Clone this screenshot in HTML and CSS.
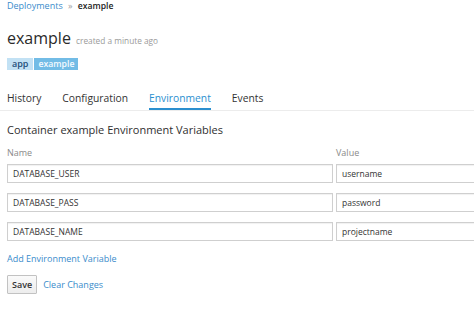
FILE: index.html
```html
<!DOCTYPE html>
<html lang="en">
<head>
    <meta charset="UTF-8">
    <title>example - Environment</title>
    <link rel="stylesheet" href="styles.css">
</head>
<body>
<div class="page">
    <div class="crumbs">
        <a href="#">Deployments</a>
        <span class="sep">&raquo;</span>
        <strong>example</strong>
    </div>

    <h1 class="title">example <small>created a minute ago</small></h1>

    <div class="labels">
        <span class="lbl_key">app</span><span class="lbl_val">example</span>
    </div>

    <ul class="tabs">
        <li>History</li>
        <li>Configuration</li>
        <li class="active">Environment</li>
        <li>Events</li>
    </ul>

    <h3 class="section">Container example Environment Variables</h3>

    <div class="env">
        <div class="env_head">
            <span>Name</span>
            <span>Value</span>
        </div>
        <div class="env_row">
            <input type="text" value="DATABASE_USER">
            <input type="text" value="username">
        </div>
        <div class="env_row">
            <input type="text" value="DATABASE_PASS">
            <input type="text" value="password">
        </div>
        <div class="env_row">
            <input type="text" value="DATABASE_NAME">
            <input type="text" value="projectname">
        </div>
    </div>

    <a href="#" class="add_link">Add Environment Variable</a>

    <div class="actions">
        <button class="btn">Save</button>
        <a href="#">Clear Changes</a>
    </div>
</div>
</body>
</html>
```

FILE: styles.css
```css
html, body {
    overflow: hidden;
}

body {
    margin: 0;
    background: #fff;
    font-family: "Open Sans", "Liberation Sans", sans-serif;
    color: #363636;
}

a {
    color: #3a8ccb;
    text-decoration: none;
}

.page {
    padding: 0 0 0 7px;
    overflow: hidden;
}

.crumbs {
    font-size: 9px;
    line-height: 12px;
}

.crumbs .sep {
    color: #a0a0a0;
    margin: 0 3px;
}

.crumbs strong {
    color: #222;
    font-size: 8.6px;
    font-weight: 600;
}

.title {
    margin: 16px 0 0;
    font-size: 16px;
    font-weight: 400;
    line-height: 20px;
    color: #2a2a2a;
}

.title small {
    font-size: 8.3px;
    line-height: 1;
    color: #9a9a9a;
    margin-left: 1px;
}

.labels {
    margin-top: 10px;
    display: flex;
    font-size: 9px;
    line-height: 12px;
    font-weight: 600;
}

.lbl_key {
    background: #c2e1f4;
    color: #1f4f7a;
    padding: 0 5px;
}

.lbl_val {
    background: #72bce6;
    color: #f4faff;
    padding: 0 4px;
    font-size: 8.7px;
    margin-left: 1px;
}

.tabs {
    list-style: none;
    margin: 21px 0 0 -7px;
    padding: 0 0 0 7px;
    display: flex;
    gap: 21px;
    border-bottom: 1px solid #ececec;
    font-size: 10.3px;
    line-height: 14px;
}

.tabs li {
    padding-bottom: 5px;
    color: #333;
}

.tabs li.active {
    color: #2b8fcf;
    border-bottom: 2px solid #2b8fcf;
    padding-bottom: 3px;
}

.section {
    margin: 11px 0 0;
    font-size: 11px;
    font-weight: 400;
    line-height: 16px;
    color: #2f2f2f;
}

.env {
    margin-top: 9px;
}

.env_head {
    display: flex;
    font-size: 9px;
    line-height: 12px;
    color: #8a8a8a;
    margin-bottom: 5px;
}

.env_head span:first-child {
    width: 329px;
}

.env_row {
    display: flex;
    gap: 3px;
    margin-bottom: 10px;
}

.env_row input {
    flex: none;
    box-sizing: border-box;
    height: 19px;
    margin: 0;
    padding: 0 5px;
    border: 1px solid #cfcfcf;
    box-shadow: inset 0 1px 1px rgba(0, 0, 0, 0.06);
    font-family: inherit;
    font-size: 8.5px;
    color: #333;
}

.env_row input:first-child {
    width: 326px;
}

.env_row input:last-child {
    width: 200px;
}

/* collapses with the last row's bottom margin */
.add_link {
    display: block;
    font-size: 9px;
    line-height: 12px;
    margin-top: 12px;
}

.actions {
    margin-top: 10px;
    display: flex;
    align-items: center;
    gap: 6px;
    font-size: 9px;
}

.btn {
    font-family: inherit;
    font-size: 9px;
    font-weight: 600;
    color: #333;
    height: 19px;
    padding: 0 4px;
    border: 1px solid #c2c2c2;
    border-radius: 1px;
    background: linear-gradient(to bottom, #fafafa, #ededed);
}
```
